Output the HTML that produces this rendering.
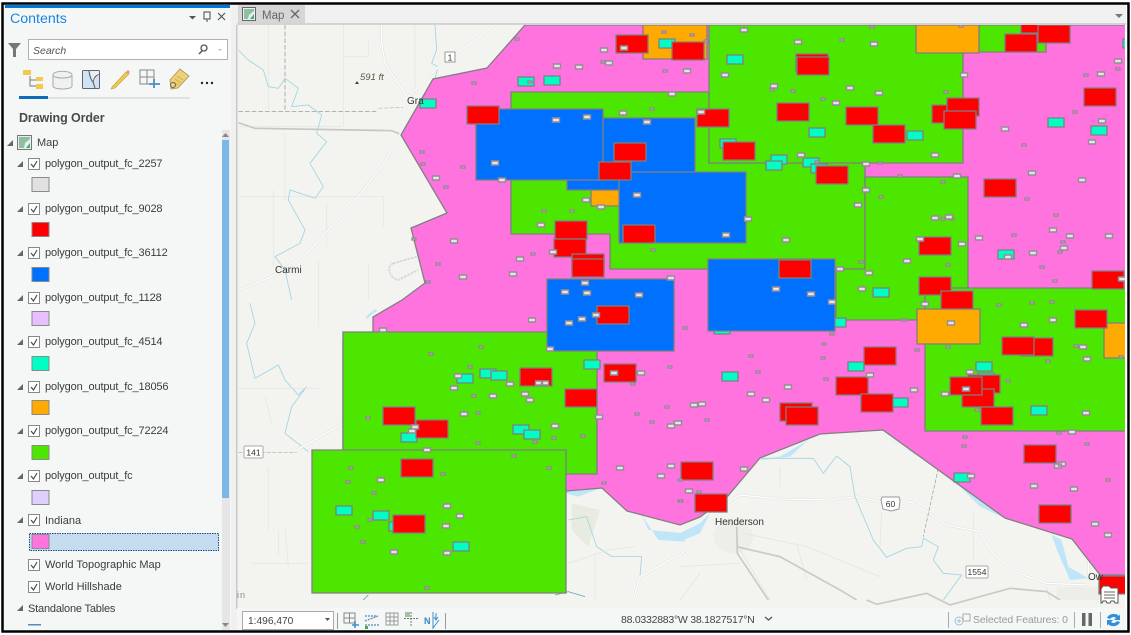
<!DOCTYPE html>
<html><head><meta charset="utf-8"><title>Map</title>
<style>
html,body{margin:0;padding:0;background:#fff;width:1131px;height:635px;overflow:hidden}
svg{display:block}
text{font-family:"Liberation Sans",sans-serif}
.l{font-size:11px;fill:#3c3c3c}
.p{font-size:11px;fill:#3c3c3c;letter-spacing:-.14px}
.m{font-size:10px;fill:#333}
</style></head><body>
<svg width="1131" height="635" viewBox="0 0 1131 635" xmlns="http://www.w3.org/2000/svg">
<defs><clipPath id="c"><rect x="237" y="25" width="888" height="583"/></clipPath></defs>
<rect width="1131" height="635" fill="#fff"/>
<g clip-path="url(#c)">
<rect x="237" y="25" width="888" height="583" fill="#f3f3f0"/>
<!-- base map: zoom5 space -->
<g transform="translate(235,0) scale(.3333)" fill="none">
<path d="M100 75V330M325 75V380M400 125V170H325M540 75V280M150 400V600M115 570V800M275 610V740M10 590H445V680M250 780V900M400 790V900M10 380H320" stroke="#e6e6e2" stroke-width="2.5"/>
<path d="M150 75V335M10 335H430" stroke="#8d8d8d" stroke-width="2" stroke-dasharray="14 6"/>
<path d="M430 325L505 322" stroke="#bbb" stroke-width="2" stroke-dasharray="12 5"/>
<path d="M10 150L40 180L85 210L100 260L130 265L150 235L190 265L170 320L220 315L260 345L245 400L275 425L225 490L265 560L240 595L165 570L160 600L210 690L195 730L120 770L150 810L170 900M600 75L605 150L590 190L610 200L600 235" stroke="#9fd4e4" stroke-width="2.5"/>
<path d="M10 368L60 385L470 392L497 403" stroke="#c6c6c2" stroke-width="5"/>
<path d="M497 400L440 500L345 620L215 760L110 830L10 870M440 75V130L450 190L510 280M780 75L600 210L520 290" stroke="#dededa" stroke-width="7"/>
<path d="M497 400L440 500L345 620L215 760L110 830L10 870M440 75V130L450 190L510 280M780 75L600 210L520 290" stroke="#fff" stroke-width="4"/>
<path d="M475 790C450 800 465 835 490 840L550 810M475 790L545 770" stroke="#d8d4da" stroke-width="5" stroke-dasharray="8 3"/>
</g>
<!-- zoom7 space -->
<g transform="translate(235,300) scale(.3333)" fill="none">
<path d="M45 10L60 70L35 130L60 235L130 195L150 240L190 285L215 260L170 320L150 400L220 455" stroke="#9fd4e4" stroke-width="2.5"/>
<path d="M250 0V80M10 265H250M100 500V690M50 790H220M90 290L110 370M150 680L160 800M130 690V770" stroke="#e6e6e2" stroke-width="2.5"/>
<path d="M185 450L325 370" stroke="#dededa" stroke-width="7"/><path d="M185 450L325 370" stroke="#fff" stroke-width="4"/>
<path d="M10 457H185" stroke="#aaa" stroke-width="2" stroke-dasharray="12 5"/>
<path d="M395 55Q405 40 425 30" stroke="#bfe6f8" stroke-width="7"/>
<path d="M992 570L1100 563L1030 590L992 580Z" fill="#bfe6f8"/>
<path d="M1010 610L1095 630L1060 740L1010 690Z" fill="#e8ebdf"/>
<path d="M1000 660L1055 650L1085 740L1130 770L1220 770L1215 830" stroke="#9fd4e4" stroke-width="2.5"/>
<path d="M1220 645L1240 690L1350 700V725L1270 720Z" fill="#bfe6f8"/>
<path d="M1195 900L1215 830L1350 755" stroke="#dededa" stroke-width="7"/><path d="M1195 900L1215 830L1350 755" stroke="#fff" stroke-width="4"/>
<path d="M1000 790L1120 750L1200 740M1080 770L1080 900" stroke="#e6e6e2" stroke-width="2.5"/>
<path d="M400 885L385 900M960 885L1000 875L1050 890" stroke="#5ea3b5" stroke-width="2.5"/>
</g>
<!-- zoom8 space -->
<g transform="translate(680,300) scale(.3333)" fill="none">
<ellipse cx="160" cy="710" rx="60" ry="50" fill="#eeeee9"/>
<rect x="1130" y="860" width="130" height="40" fill="#eeeee9"/>
<path d="M240 478L300 470L385 420L330 470L245 480ZM590 392L700 460L800 515L870 580L975 655L900 620L840 560L760 490L650 430ZM1115 705L1145 720L1165 800L1225 835L1170 840L1135 760ZM0 700L60 670L90 640L60 700L0 725Z" fill="#bfe6f8"/>
<path d="M0 800L180 790M60 820L0 900M170 680L175 740L270 900M350 730L380 840M605 640L600 740M880 640L880 780M300 500L300 560M190 700L380 740L600 830M1100 860L1110 900" stroke="#e4e4e0" stroke-width="2.5"/>
<path d="M170 680L172 760L265 900M170 740L300 770L480 870L530 900M560 900L590 913L740 880L810 915L990 865L1100 875L1140 900" stroke="#c9c9c5" stroke-width="5"/>
<path d="M140 610L180 585L300 597L450 600L530 590L600 605L660 625L690 605L740 635L800 675L900 695L930 750L1000 815L1100 850L1220 855M0 765L90 690M1225 830V780" stroke="#dededa" stroke-width="7"/>
<path d="M140 610L180 585L300 597L450 600L530 590L600 605L660 625L690 605L740 635L800 675L900 695L930 750L1000 815L1100 850L1220 855M0 765L90 690M1225 830V780" stroke="#fff" stroke-width="4"/>
<path d="M245 475L400 475L430 520L470 468L510 500L525 590L580 720L620 772L680 745L725 740L730 715L775 740L760 780L790 820L845 825L790 900" stroke="#9fd4e4" stroke-width="2.5"/>
<path d="M775 505L730 710" stroke="#999" stroke-width="2" stroke-dasharray="12 5"/>
</g>
<!-- polygons -->
<g stroke="#7f7f7f" stroke-width="1.300">
<path d="M525 25L487 68L433 79L401 135L447 213L411 228L425 283L402 300L373 317V332L343 340V491H566L602 488L627 511L680 525L700 517L727 497L760 458L820 434L883 430L1005 518L1072 539L1100 575H1130V25Z" fill="#ff73df"/>
<g fill="#4ce600">
<path d="M511 92H709V163H865V269H610V234H511Z"/>
<path d="M865 177h103v111h-43v32h-89v-51h29z"/>
<path d="M925 288h205v143h-205z"/>
<path d="M709 25h254v138h-254z"/>
<path d="M979 25h67v27h-67z"/>
<path d="M343 332h254v142h-254z"/>
<path d="M312 450h254v143h-254z"/>
</g>
<g fill="#ffaa00"><path d="M643 25h64v34h-64z"/><path d="M591 190h29v16h-29z"/><path d="M917 309h63v35h-63z"/><path d="M1104 323h30v35h-30z"/><path d="M916 25h63v28h-63z"/></g>
<g fill="#00ffc5"><path d="M518 77h16v9h-16zM544 76h16v9h-16zM420 99h16v9h-16zM659 39h16v9h-16zM727 55h16v9h-16zM809 128h16v9h-16zM907 131h16v9h-16zM720 139h16v9h-16z"/><path d="M771 155h16v9h-16z"/><path d="M766 161h16v9h-16z"/><path d="M803 158h16v9h-16z"/><path d="M811 164h16v9h-16z"/><path d="M1048 118h16v9h-16zM1091 126h16v9h-16zM998 250h16v9h-16zM873 288h16v9h-16zM1123 39h16v9h-16zM584 360h16v9h-16z"/><path d="M480 369h16v9h-16z"/><path d="M491 371h16v9h-16z"/><path d="M457 374h16v9h-16z"/><path d="M513 425h16v9h-16z"/><path d="M524 430h16v9h-16z"/><path d="M401 433h16v9h-16zM336 506h16v9h-16zM373 511h16v9h-16zM389 522h16v9h-16zM453 542h16v9h-16zM830 318h16v9h-16zM714 325h16v9h-16zM848 362h16v9h-16zM722 372h16v9h-16zM892 398h16v9h-16z"/><path d="M978 373h16v9h-16z"/><path d="M976 362h16v9h-16z"/><path d="M1031 406h16v9h-16zM954 473h16v9h-16zM1000 186h16v9h-16z"/></g>
<g fill="#0070ff"><path d="M603 118h92v72h-128v-10h36z"/><path d="M476 109h127v71h-127z"/><path d="M619 172h127v71h-127z"/><path d="M708 259h127v72h-127z"/><path d="M547 279h127v72h-127z"/></g>
<g fill="#ff0000"><path d="M616 35h32v18h-32z"/><path d="M672 42h32v18h-32z"/><path d="M467 106h32v18h-32z"/><path d="M614 143h32v18h-32z"/><path d="M599 162h32v18h-32z"/><path d="M623 225h32v18h-32z"/><path d="M555 221h32v18h-32z"/><path d="M554 239h32v18h-32z"/><path d="M572 254h32v18h-32z"/><path d="M572 259h32v18h-32z"/><path d="M796 54h32v18h-32z"/><path d="M797 57h32v18h-32z"/><path d="M1021 22h32v11h-32z"/><path d="M1005 34h32v18h-32z"/><path d="M1038 25h32v18h-32z"/><path d="M777 103h32v18h-32z"/><path d="M697 109h32v18h-32z"/><path d="M846 107h32v18h-32z"/><path d="M873 125h32v18h-32z"/><path d="M932 105h32v18h-32z"/><path d="M947 98h32v18h-32z"/><path d="M944 111h32v18h-32z"/><path d="M1084 88h32v18h-32z"/><path d="M723 142h32v18h-32z"/><path d="M816 166h32v18h-32z"/><path d="M984 179h32v18h-32z"/><path d="M919 237h32v18h-32z"/><path d="M779 260h32v18h-32z"/><path d="M919 277h32v18h-32z"/><path d="M941 291h32v18h-32z"/><path d="M1092 271h32v18h-32z"/><path d="M597 306h32v18h-32z"/><path d="M604 364h32v18h-32z"/><path d="M520 368h32v18h-32z"/><path d="M565 389h32v18h-32z"/><path d="M383 407h32v18h-32z"/><path d="M416 420h32v18h-32z"/><path d="M401 459h32v18h-32z"/><path d="M393 515h32v18h-32z"/><path d="M1075 310h32v18h-32z"/><path d="M1021 338h32v18h-32z"/><path d="M1002 337h32v18h-32z"/><path d="M864 347h32v18h-32z"/><path d="M836 377h32v18h-32z"/><path d="M861 394h32v18h-32z"/><path d="M780 403h32v18h-32z"/><path d="M786 407h32v18h-32z"/><path d="M968 375h32v18h-32z"/><path d="M962 389h32v18h-32z"/><path d="M950 377h32v18h-32z"/><path d="M981 407h32v18h-32z"/><path d="M1024 445h32v18h-32z"/><path d="M681 462h32v18h-32z"/><path d="M695 494h32v18h-32z"/><path d="M1039 505h32v18h-32z"/><path d="M1099 576h32v18h-32z"/></g>
</g>
<!-- small markers -->
<g transform="translate(-2,-1)" fill="#d9b8e8" stroke="#8f858f" stroke-width="1.200">
<path d="M517 39h4v2h-4zM664 32h4v2h-4zM603 62h4v2h-4zM665 71h4v2h-4zM474 83h4v2h-4zM530 82h4v2h-4zM652 109h4v2h-4zM422 152h4v2h-4zM423 164h4v2h-4zM463 167h4v2h-4zM446 187h4v2h-4zM544 211h4v2h-4zM572 211h4v2h-4zM414 239h4v2h-4zM533 254h4v2h-4zM438 264h4v2h-4zM428 282h4v2h-4zM653 250h4v2h-4zM872 27h4v2h-4zM961 26h4v2h-4zM692 35h4v2h-4zM706 41h4v2h-4zM842 40h4v2h-4zM772 90h4v2h-4zM793 91h4v2h-4zM823 99h4v2h-4zM946 92h4v2h-4zM1086 75h4v2h-4zM1118 69h4v2h-4zM1075 112h4v2h-4zM1024 145h4v2h-4zM817 162h4v2h-4zM880 163h4v2h-4zM900 176h4v2h-4zM943 182h4v2h-4zM881 197h4v2h-4zM1027 199h4v2h-4zM943 219h4v2h-4zM952 219h4v2h-4zM1056 215h4v2h-4zM1014 235h4v2h-4zM1063 242h4v2h-4zM1060 252h4v2h-4zM1042 267h4v2h-4zM861 262h4v2h-4zM948 265h4v2h-4zM1055 281h4v2h-4zM481 347h4v2h-4zM431 354h4v2h-4zM470 367h4v2h-4zM670 367h4v2h-4zM633 384h4v2h-4zM474 396h4v2h-4zM478 413h4v2h-4zM368 418h4v2h-4zM637 414h4v2h-4zM667 407h4v2h-4zM652 422h4v2h-4zM583 436h4v2h-4zM554 438h4v2h-4zM535 442h4v2h-4zM478 443h4v2h-4zM514 456h4v2h-4zM351 468h4v2h-4zM549 468h4v2h-4zM443 474h4v2h-4zM348 482h4v2h-4zM604 483h4v2h-4zM374 493h4v2h-4zM680 480h4v2h-4zM680 501h4v2h-4zM370 520h4v2h-4zM357 527h4v2h-4zM363 542h4v2h-4zM427 588h4v2h-4zM999 305h4v2h-4zM1032 303h4v2h-4zM1052 302h4v2h-4zM904 320h4v2h-4zM685 328h4v2h-4zM832 334h4v2h-4zM824 344h4v2h-4zM917 350h4v2h-4zM948 347h4v2h-4zM751 356h4v2h-4zM823 358h4v2h-4zM758 372h4v2h-4zM826 379h4v2h-4zM1008 381h4v2h-4zM977 410h4v2h-4zM707 420h4v2h-4zM1076 346h4v2h-4zM1048 361h4v2h-4zM1121 357h4v2h-4zM965 437h4v2h-4zM964 446h4v2h-4zM1059 433h4v2h-4zM1087 444h4v2h-4zM1108 480h4v2h-4zM699 492h4v2h-4zM681 501h4v2h-4z"/>
</g>
<!-- large markers -->
<g transform="translate(-3.500,-2)" fill="#e6e6e6" stroke="#968c96" stroke-width="1.400">
<path d="M604 50h7v4h-7zM557 66h7v4h-7zM579 67h7v4h-7zM609 63h7v4h-7zM624 48h7v4h-7zM672 94h7v4h-7zM623 113h7v4h-7zM556 120h7v4h-7zM587 117h7v4h-7zM647 122h7v4h-7zM495 163h7v4h-7zM502 180h7v4h-7zM436 178h7v4h-7zM586 200h7v4h-7zM601 207h7v4h-7zM637 195h7v4h-7zM541 225h7v4h-7zM454 241h7v4h-7zM553 252h7v4h-7zM520 259h7v4h-7zM513 274h7v4h-7zM463 277h7v4h-7zM585 283h7v4h-7zM565 292h7v4h-7zM587 293h7v4h-7zM639 295h7v4h-7zM671 278h7v4h-7zM744 30h7v4h-7zM798 42h7v4h-7zM874 44h7v4h-7zM687 71h7v4h-7zM725 75h7v4h-7zM774 86h7v4h-7zM850 88h7v4h-7zM879 93h7v4h-7zM964 75h7v4h-7zM836 103h7v4h-7zM701 112h7v4h-7zM801 155h7v4h-7zM935 155h7v4h-7zM866 164h7v4h-7zM957 176h7v4h-7zM866 190h7v4h-7zM858 205h7v4h-7zM748 219h7v4h-7zM726 235h7v4h-7zM786 240h7v4h-7zM935 218h7v4h-7zM949 217h7v4h-7zM920 239h7v4h-7zM962 244h7v4h-7zM907 261h7v4h-7zM840 269h7v4h-7zM869 273h7v4h-7zM862 289h7v4h-7zM776 289h7v4h-7zM811 294h7v4h-7zM1118 61h7v4h-7zM1101 74h7v4h-7zM1005 129h7v4h-7zM1102 121h7v4h-7zM1092 142h7v4h-7zM1032 173h7v4h-7zM1082 180h7v4h-7zM1053 230h7v4h-7zM1070 236h7v4h-7zM979 238h7v4h-7zM1109 236h7v4h-7zM1064 248h7v4h-7zM1033 253h7v4h-7zM1008 257h7v4h-7zM1122 279h7v4h-7zM383 330h7v4h-7zM532 320h7v4h-7zM569 323h7v4h-7zM582 319h7v4h-7zM596 315h7v4h-7zM550 349h7v4h-7zM641 373h7v4h-7zM614 373h7v4h-7zM458 376h7v4h-7zM510 384h7v4h-7zM539 383h7v4h-7zM545 383h7v4h-7zM454 388h7v4h-7zM493 396h7v4h-7zM525 394h7v4h-7zM530 400h7v4h-7zM464 414h7v4h-7zM555 426h7v4h-7zM599 417h7v4h-7zM415 427h7v4h-7zM412 431h7v4h-7zM671 426h7v4h-7zM678 423h7v4h-7zM427 450h7v4h-7zM620 468h7v4h-7zM661 476h7v4h-7zM671 466h7v4h-7zM381 480h7v4h-7zM447 506h7v4h-7zM460 516h7v4h-7zM446 526h7v4h-7zM394 552h7v4h-7zM447 553h7v4h-7zM832 302h7v4h-7zM925 304h7v4h-7zM951 323h7v4h-7zM1024 325h7v4h-7zM1053 320h7v4h-7zM1083 347h7v4h-7zM1087 359h7v4h-7zM970 372h7v4h-7zM966 389h7v4h-7zM945 394h7v4h-7zM1086 413h7v4h-7zM1072 432h7v4h-7zM870 375h7v4h-7zM914 390h7v4h-7zM788 387h7v4h-7zM751 394h7v4h-7zM766 400h7v4h-7zM694 405h7v4h-7zM702 404h7v4h-7zM744 469h7v4h-7zM689 491h7v4h-7zM1058 466h7v4h-7zM1062 464h7v4h-7zM971 476h7v4h-7zM1034 486h7v4h-7zM1074 489h7v4h-7zM1095 524h7v4h-7zM1108 535h7v4h-7z"/>
</g>
<!-- labels -->
<text x="360" y="80" font-size="9.500" font-style="italic" fill="#5f5a45">591 ft</text>
<path d="M355 84l2-3 2 3z" fill="#444"/>
<text x="407" y="104" class="m">Gra</text>
<text x="275" y="273" class="m">Carmi</text>
<text x="715" y="525" class="m">Henderson</text>
<text x="1088" y="580" class="m">Ow</text>
<text x="237" y="598" font-size="9" fill="#8a8a8a" letter-spacing="1">in</text>
<g font-size="8.500" fill="#333" text-anchor="middle">
<rect x="445" y="52" width="10" height="10" fill="#fff" stroke="#999"/><text x="450" y="60.500">1</text>
<rect x="244" y="446" width="19" height="12" rx="1" fill="#fff" stroke="#aaa"/><text x="253.500" y="455.500">141</text>
<path d="M882 497h17l1 3-1 9-8 2-8-2-2-9z" fill="#fff" stroke="#999"/><text x="890.500" y="507">60</text>
<rect x="966" y="566" width="22" height="12" rx="1" fill="#fff" stroke="#aaa"/><text x="977" y="575">1554</text>
</g>
<path d="M1101 603v-14l2-3h6l2 2h7v15h-3l-1-2h-3l-1 2h-3l-1-2h-3l-1 2z" fill="#fff" stroke="#555" stroke-width="1"/>
<path d="M1104 592h11M1104 595h11M1104 598h11" stroke="#666"/>
</g>

<!-- tab strip -->
<rect x="231" y="4" width="895" height="21" fill="#f0f0f0"/>
<rect x="237" y="23" width="889" height="2" fill="#d4d4d4"/>
<rect x="238" y="5" width="67" height="18" fill="#d6d6d6"/>
<rect x="242.500" y="7.500" width="13" height="13" fill="#e6f0f0" stroke="#666"/>
<path d="M244 9h10v2l-5 4-1 4h-4z" fill="#8fbf9f"/><path d="M254 14v5h-4z" fill="#4caa7a"/>
<text x="262" y="19" font-size="11.500" fill="#666">Map</text>
<path d="M291 10l8 8M299 10l-8 8" stroke="#666" stroke-width="1.300"/>
<path d="M1115 14h8l-4 4z" fill="#777"/>

<!-- left panel -->
<rect x="3" y="4" width="228" height="627" fill="#f5f7f7"/>
<rect x="231" y="4" width="6" height="627" fill="#f0f0f0"/>
<rect x="236" y="25" width="1.500" height="584" fill="#c8c8c8"/>
<rect x="5" y="5" width="225" height="3" fill="#0078d7"/>
<text x="10" y="23" font-size="14.200" fill="#1a86e0">Contents</text>
<path d="M189 16h7l-3.500 3.500z" fill="#555"/>
<path d="M204 12h6v7h-6zM207 19v3" fill="none" stroke="#666" stroke-width="1.200"/>
<path d="M218 13l7 7M225 13l-7 7" stroke="#555" stroke-width="1.200"/>
<!-- filter and search -->
<path d="M8 43h13l-5 6v8h-3v-8z" fill="#777"/>
<rect x="28.500" y="39.500" width="199" height="20" fill="#fff" stroke="#b0b0b0"/>
<text x="33" y="54" font-size="10.500" font-style="italic" fill="#555">Search</text>
<circle cx="204" cy="48" r="3" fill="none" stroke="#555" stroke-width="1.300"/><path d="M202 51l-3 3" stroke="#555" stroke-width="1.500"/>
<path d="M218 49h4l-2 2z" fill="#bbb"/>
<!-- toolbar icons -->
<path d="M30 76v10h7M30 80h7" fill="none" stroke="#777"/>
<rect x="23" y="70" width="8" height="5" fill="#f2c94c"/><rect x="36" y="77" width="7" height="4" fill="#f2c94c"/><rect x="36" y="84" width="7" height="5" fill="#f2c94c"/>
<path d="M53 75c0-5 19-5 19 0v11c0 4-19 4-19 0z" fill="#f0f0f0" stroke="#aaa"/><path d="M53 75c0 4 19 4 19 0" fill="none" stroke="#aaa"/>
<rect x="82.500" y="70.500" width="17" height="18" rx="1" fill="#cfe3f5" stroke="#666"/>
<path d="M89 71q1 8 4 11l2 6M93 82q1-6 6-8" fill="none" stroke="#555"/><path d="M90 71h9v3q-5 1-6 7z" fill="#eee"/>
<path d="M112 87l14-15 3 2-14 14-4 1z" fill="#f2c94c" stroke="#b8a040" stroke-width=".6"/><path d="M126 72l2-2 2 2-2 2z" fill="#d98"/>
<path d="M140 70h14v14h-14zM147 70v14M140 77h14" fill="none" stroke="#888"/>
<path d="M154 79v9M149 84h11" stroke="#4a90c4" stroke-width="1.800"/>
<path d="M170 80l10-11 9 7-11 12-7 1z" fill="#edd079" stroke="#b09a50" stroke-width=".9"/><path d="M177 76l6 4M175 79l6 4M174 82l4 3" stroke="#c7a850" stroke-width=".8"/>
<circle cx="173" cy="85" r="2.500" fill="none" stroke="#666"/>
<circle cx="202" cy="83" r="1.200" fill="#222"/><circle cx="207" cy="83" r="1.200" fill="#222"/><circle cx="212" cy="83" r="1.200" fill="#222"/>
<rect x="19" y="97" width="171" height="2" fill="#e2e2e2"/>
<rect x="19" y="96" width="29" height="3" fill="#0f6cbd"/>
<text x="19" y="122" font-size="12.500" font-weight="bold" fill="#4a4a4a" letter-spacing="-.1">Drawing Order</text>
<!-- tree -->
<path d="M7 146l6-6v6z" fill="#666"/>
<rect x="17.500" y="135.500" width="14" height="14" fill="#e6f0f0" stroke="#777"/>
<path d="M19 137h11v2l-5 4-1 5h-5z" fill="#8fbf9f"/><path d="M30 143v5h-4z" fill="#4caa7a"/>
<text x="37" y="146" class="l">Map</text>
<defs>
<g id="k"><rect x="28.500" y="-5.500" width="11" height="11" fill="#fff" stroke="#888"/><path d="M31 0l2.500 3L37-3" fill="none" stroke="#444" stroke-width="1.100"/></g>
<path id="t" d="M17 3l6-6v6z" fill="#666"/>
</defs>
<g><use href="#k" y="164"/><use href="#t" y="164"/><text x="45" y="167" class="p">polygon_output_fc_2257</text></g>
<g><use href="#k" y="209"/><use href="#t" y="209"/><text x="45" y="212" class="p">polygon_output_fc_9028</text></g>
<g><use href="#k" y="253"/><use href="#t" y="253"/><text x="45" y="256" class="p">polygon_output_fc_36112</text></g>
<g><use href="#k" y="298"/><use href="#t" y="298"/><text x="45" y="301" class="p">polygon_output_fc_1128</text></g>
<g><use href="#k" y="342"/><use href="#t" y="342"/><text x="45" y="345" class="p">polygon_output_fc_4514</text></g>
<g><use href="#k" y="387"/><use href="#t" y="387"/><text x="45" y="390" class="p">polygon_output_fc_18056</text></g>
<g><use href="#k" y="431"/><use href="#t" y="431"/><text x="45" y="434" class="p">polygon_output_fc_72224</text></g>
<g><use href="#k" y="476"/><use href="#t" y="476"/><text x="45" y="479" class="p">polygon_output_fc</text></g>
<g><use href="#k" y="520"/><use href="#t" y="520"/><text x="45" y="524" class="l">Indiana</text></g>
<rect x="29.500" y="533.500" width="189" height="17" fill="#c5dcf0" stroke="#1a4a7a" stroke-dasharray="1.500 1"/>
<g stroke="#8a8a8a" stroke-width="1">
<rect x="32" y="177.500" width="17" height="14" fill="#e1e1e1"/>
<rect x="32" y="222.500" width="17" height="14" fill="#ff0000"/>
<rect x="32" y="267.500" width="17" height="14" fill="#0070ff"/>
<rect x="32" y="311.500" width="17" height="14" fill="#e8beff"/>
<rect x="32" y="356.500" width="17" height="14" fill="#00ffc5"/>
<rect x="32" y="400.500" width="17" height="14" fill="#ffaa00"/>
<rect x="32" y="445.500" width="17" height="14" fill="#4ce600"/>
<rect x="32" y="490.500" width="17" height="14" fill="#dfcfff"/>
<rect x="32" y="534.500" width="17" height="14" fill="#ff73df"/>
</g>
<use href="#k" y="565"/><text x="45" y="568" class="l">World Topographic Map</text>
<use href="#k" y="587"/><text x="45" y="590" class="l">World Hillshade</text>
<use href="#t" y="608"/><text x="28" y="612" class="l" letter-spacing="-.18">Standalone Tables</text>
<rect x="28" y="624" width="13" height="1.500" fill="#5a8ab5"/>
<!-- scrollbar -->
<rect x="222" y="130" width="8" height="500" fill="#e6e6e6"/>
<rect x="222" y="140" width="7" height="358" fill="#79b8e8"/>
<path d="M222 137l3.500-4 3.500 4z" fill="#888"/><path d="M222 623l3.500 4 3.500-4z" fill="#888"/>

<!-- status bar -->
<rect x="237" y="608" width="889" height="23" fill="#f5f7f7"/>
<rect x="242.500" y="611.500" width="91" height="18" fill="#fff" stroke="#aaa"/>
<text x="248" y="624" font-size="10.200" fill="#444">1:496,470</text>
<path d="M325 618h5l-2.500 3z" fill="#555"/>
<path d="M337.500 613v16M445.500 613v16" stroke="#999"/>
<path d="M344 613h11v10h-11zM349.500 613v10M344 618h11" fill="none" stroke="#888"/><path d="M355 621v7M352 625h7" stroke="#3f8fca" stroke-width="1.600"/>
<path d="M365 616h12M365 621l13-5M365 625h14" stroke="#6d9ec0" stroke-width="1.500" stroke-dasharray="2 1"/><rect x="365" y="626" width="3" height="3" fill="#4ca64c"/>
<path d="M386 613h12v12h-12zM390 613v12M394 613v12M386 617h12M386 621h12" fill="none" stroke="#999"/>
<path d="M404 618.500h14M411 612v14" stroke="#777" stroke-dasharray="2 1"/><rect x="405" y="612" width="5" height="5" fill="#9fc59f"/>
<text x="424" y="624" font-size="9" font-weight="bold" fill="#2f86c8">N</text>
<path d="M433 612v16l6-8M436 613l0 6M434 617l2 3 2-3" fill="none" stroke="#3f8fca"/>
<text x="621" y="623" font-size="10.500" fill="#444" letter-spacing="-.25">88.0332883°W 38.1827517°N</text>
<path d="M765 617l3.500 3 3.500-3" fill="none" stroke="#555" stroke-width="1.300"/>
<path d="M948.500 612v16M1074.500 612v16M1100.500 612v16" stroke="#aaa"/>
<circle cx="959" cy="621" r="4" fill="none" stroke="#9cc0d8"/><path d="M957 621h4M959 619v4" stroke="#9cc0d8"/>
<path d="M963 614h7v7h-7z" fill="none" stroke="#aaa"/>
<text x="973" y="623" font-size="10.500" fill="#999" letter-spacing="-.1">Selected Features: 0</text>
<rect x="1082" y="613" width="3.500" height="13" fill="#666"/><rect x="1088.500" y="613" width="3.500" height="13" fill="#666"/>
<path d="M1107 618a7 6 0 0 1 12-2l1-2v6h-6l2-2a4 4 0 0 0-6 1zM1120 622a7 6 0 0 1-12 2l-1 2v-6h6l-2 2a4 4 0 0 0 6-1z" fill="#2e8fdc"/>

<!-- screenshot frame -->
<path d="M2.500 3.500H1128.500V631.500H2.500Z" fill="none" stroke="#000" stroke-width="2.500"/>
</svg>
</body></html>
